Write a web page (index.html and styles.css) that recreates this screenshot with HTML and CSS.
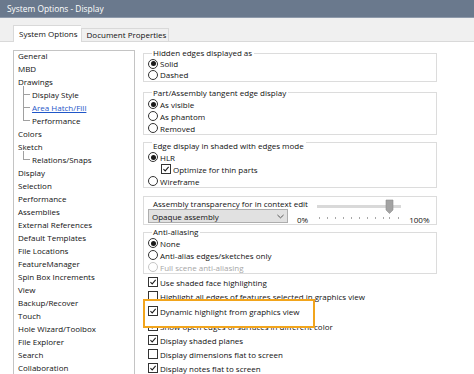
FILE: index.html
```html
<!DOCTYPE html>
<html>
<head>
<meta charset="utf-8">
<link rel="stylesheet" href="styles.css">
</head>
<body>
<div class="titlebar">System Options - Display</div>
<div class="tabs">
  <div class="tab active">System Options</div>
  <div class="tab">Document Properties</div>
</div>
<div class="panel">
  <div class="tree">
    <div class="list">
      <div class="item">General</div>
      <div class="item">MBD</div>
      <div class="item">Drawings</div>
      <div class="item sub first">Display Style</div>
      <div class="item sub link">Area Hatch/Fill</div>
      <div class="item sub">Performance</div>
      <div class="item">Colors</div>
      <div class="item">Sketch</div>
      <div class="item sub first">Relations/Snaps</div>
      <div class="item">Display</div>
      <div class="item">Selection</div>
      <div class="item">Performance</div>
      <div class="item">Assemblies</div>
      <div class="item">External References</div>
      <div class="item">Default Templates</div>
      <div class="item">File Locations</div>
      <div class="item">FeatureManager</div>
      <div class="item">Spin Box Increments</div>
      <div class="item">View</div>
      <div class="item">Backup/Recover</div>
      <div class="item">Touch</div>
      <div class="item">Hole Wizard/Toolbox</div>
      <div class="item">File Explorer</div>
      <div class="item">Search</div>
      <div class="item">Collaboration</div>
    </div>
  </div>
  <div class="options">
    <div class="group g1">
      <div class="legend">Hidden edges displayed as</div>
      <div class="opt"><span class="radio on"></span>Solid</div>
      <div class="opt"><span class="radio"></span>Dashed</div>
    </div>
    <div class="group g2">
      <div class="legend">Part/Assembly tangent edge display</div>
      <div class="opt"><span class="radio on"></span>As visible</div>
      <div class="opt"><span class="radio"></span>As phantom</div>
      <div class="opt"><span class="radio"></span>Removed</div>
    </div>
    <div class="group g3">
      <div class="legend">Edge display in shaded with edges mode</div>
      <div class="opt"><span class="radio on"></span>HLR</div>
      <div class="opt indent"><span class="check on"><svg viewBox="0 0 10 10"><path d="M1.8 5.2 L4 7.4 L8.3 2.4"/></svg></span>Optimize for thin parts</div>
      <div class="opt"><span class="radio"></span>Wireframe</div>
    </div>
    <div class="group g4">
      <div class="legend">Assembly transparency for in context edit</div>
      <div class="transp">
        <div class="select"><span>Opaque assembly</span><svg class="chev" viewBox="0 0 8 5"><path d="M0.5 0.8 L4 4 L7.5 0.8"/></svg></div>
        <span class="pct">0%</span>
        <svg class="slider" viewBox="0 0 86 22" width="86" height="22">
          <rect x="0" y="6" width="84" height="3" fill="#d9d9d9"/>
          <polygon points="69,1 76,1 76,11 72.5,14.5 69,11" fill="#a3a3a3" stroke="#8f8f8f" stroke-width="0.6"/>
          <g stroke="#a8a8a8" stroke-width="1">
            <line x1="2.5" y1="18" x2="2.5" y2="20"/>
            <line x1="10.5" y1="18" x2="10.5" y2="20"/>
            <line x1="18.5" y1="18" x2="18.5" y2="20"/>
            <line x1="26.5" y1="18" x2="26.5" y2="20"/>
            <line x1="34.5" y1="18" x2="34.5" y2="20"/>
            <line x1="42.5" y1="18" x2="42.5" y2="20"/>
            <line x1="50.5" y1="18" x2="50.5" y2="20"/>
            <line x1="58.5" y1="18" x2="58.5" y2="20"/>
            <line x1="66.5" y1="18" x2="66.5" y2="20"/>
            <line x1="72.5" y1="18" x2="72.5" y2="20"/>
            <line x1="81.5" y1="18" x2="81.5" y2="20"/>
          </g>
        </svg>
        <span class="pct100">100%</span>
      </div>
    </div>
    <div class="group g5">
      <div class="legend">Anti-aliasing</div>
      <div class="opt"><span class="radio on"></span>None</div>
      <div class="opt"><span class="radio"></span>Anti-alias edges/sketches only</div>
      <div class="opt disabled"><span class="radio"></span>Full scene anti-aliasing</div>
    </div>
    <div class="checks">
      <div class="copt"><span class="check"><svg viewBox="0 0 10 10"><path d="M1.8 5.2 L4 7.4 L8.3 2.4"/></svg></span>Use shaded face highlighting</div>
      <div class="copt"><span class="check"></span>Highlight all edges of features selected in graphics view</div>
      <div class="copt hl"><span class="check"><svg viewBox="0 0 10 10"><path d="M1.8 5.2 L4 7.4 L8.3 2.4"/></svg></span>Dynamic highlight from graphics view</div>
      <div class="copt"><span class="check"><svg viewBox="0 0 10 10"><path d="M1.8 5.2 L4 7.4 L8.3 2.4"/></svg></span>Show open edges of surfaces in different color</div>
      <div class="copt"><span class="check"><svg viewBox="0 0 10 10"><path d="M1.8 5.2 L4 7.4 L8.3 2.4"/></svg></span>Display shaded planes</div>
      <div class="copt"><span class="check"></span>Display dimensions flat to screen</div>
      <div class="copt"><span class="check"><svg viewBox="0 0 10 10"><path d="M1.8 5.2 L4 7.4 L8.3 2.4"/></svg></span>Display notes flat to screen</div>
    </div>
  </div>
</div>
</body>
</html>
```
FILE: styles.css
```css
* { box-sizing: border-box; }
html, body { margin: 0; padding: 0; }
body {
  width: 474px;
  height: 374px;
  overflow: hidden;
  background: #f0f0f0;
  font-family: "Open Sans", "Noto Sans", sans-serif;
  font-size: 8px;
  color: #111;
}
.titlebar {
  height: 18px;
  background: #6a798d;
  border-bottom: 1px solid #8e9aab;
  color: #fff;
  font-size: 8.4px;
  line-height: 17px;
  padding-left: 7px;
}
.tabs {
  height: 24px;
  display: flex;
  align-items: flex-end;
  padding-left: 13px;
  border-bottom: 1px solid #d9d9d9;
}
.tab {
  height: 13px;
  line-height: 12px;
  padding: 0 2px 0 5px;
  border: 1px solid #d9d9d9;
  border-bottom: none;
  background: #f0f0f0;
}
.tab.active {
  height: 17px;
  line-height: 15px;
  background: #fff;
  margin-bottom: -1px;
  border-right: none;
  padding-right: 3px;
}
.panel {
  background: #fff;
  display: flex;
  align-items: flex-start;
  height: 332px;
  padding: 8px 0 0 13px;
}
.tree {
  width: 122px;
  height: 340px;
  border: 1px solid #c4c4c4;
  overflow: hidden;
  flex: none;
}
.list { margin-top: -2px; }
.item {
  height: 13px;
  line-height: 13px;
  padding-left: 4px;
  white-space: nowrap;
}
.item.sub {
  position: relative;
  padding-left: 18px;
}
.item.sub::before {
  content: "";
  position: absolute;
  left: 9px;
  top: -6px;
  width: 6px;
  height: 12px;
  border-left: 1px solid #a0a0a0;
  border-bottom: 1px solid #a0a0a0;
}
.item.sub.first::before {
  top: -2px;
  height: 8px;
}
.item.link { color: #1f56c8; text-decoration: underline; }

.options {
  width: 294px;
  margin-left: 8px;
  margin-top: 3px;
  flex: none;
}
.group {
  border: 1px solid #dcdcdc;
  padding: 0 4px;
}
.legend {
  display: block;
  width: fit-content;
  height: 10px;
  line-height: 10px;
  margin: -6px 0 0 4px;
  padding: 0 2px 0 1px;
  background: #fff;
  white-space: nowrap;
}
.opt {
  display: flex;
  align-items: center;
  gap: 2px;
  height: 12px;
  white-space: nowrap;
}
.opt.indent { padding-left: 13px; }
.opt.disabled { color: #a6a6a6; }
.g1 .opt { height: 11px; }
.g1 { padding-bottom: 1px; }
.g2 { margin-top: 10px; padding-top: 1px; }
.g3 { margin-top: 7px; padding-top: 4px; }
.g4 { margin-top: 8px; padding-top: 8px; padding-bottom: 1px; }
.g5 { margin-top: 7px; }
.g5 .opt:first-of-type { height: 11px; }

.radio {
  width: 10px;
  height: 10px;
  border: 1px solid #333;
  border-radius: 50%;
  background: #fff;
  flex: none;
  display: flex;
  align-items: center;
  justify-content: center;
}
.radio.on::after {
  content: "";
  width: 5px;
  height: 5px;
  border-radius: 50%;
  background: #1a1a1a;
}
.disabled .radio { border-color: #c6c6c6; }
.check {
  width: 10px;
  height: 10px;
  border: 1px solid #333;
  background: #fff;
  flex: none;
  display: flex;
}
.check svg {
  width: 8px;
  height: 8px;
  fill: none;
  stroke: #1a1a1a;
  stroke-width: 1.3;
}
.transp {
  display: flex;
  align-items: center;
  height: 14px;
}
.select {
  width: 140px;
  height: 14px;
  background: #e1e1e1;
  border: 1px solid #adadad;
  display: flex;
  align-items: center;
  justify-content: space-between;
  padding: 0 3px 0 3px;
  flex: none;
}
.chev {
  width: 7px;
  height: 5px;
  fill: none;
  stroke: #444;
  stroke-width: 1;
}
.pct { margin-left: 9px; margin-top: 6px; }
.slider {
  align-self: flex-start;
  margin-top: -10px;
  margin-left: 9px;
  flex: none;
}
.pct100 { margin-left: 6px; margin-top: 6px; }

.checks {
  margin-top: 1px;
}
.copt {
  display: flex;
  align-items: center;
  gap: 2px;
  height: 14px;
  padding-left: 5px;
  white-space: nowrap;
}
.copt.hl {
  position: relative;
  z-index: 1;
  height: 16px;
}
.copt.hl::before {
  content: "";
  position: absolute;
  left: 0;
  top: -4px;
  width: 168px;
  height: 25px;
  background: #fff;
  border: 2px solid #f2a51c;
  z-index: -1;
}
```
